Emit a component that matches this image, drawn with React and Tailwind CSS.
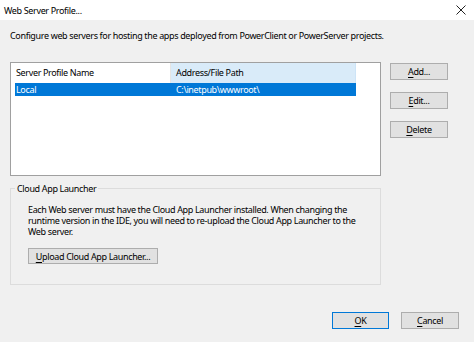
import React from 'react';

const font = "font-['Noto_Sans','Liberation_Sans',sans-serif]";
const txt = 'text-[9px] tracking-[-0.35px]';

const DlgButton = ({ accel, rest, isDefault = false, className = '' }) => (
  <button
    className={`flex items-center justify-center whitespace-nowrap bg-[#e1e1e1] ${txt} leading-none text-black border ${
      isDefault ? 'border-[#0078d7] border-[1.5px]' : 'border-[#adadad]'
    } ${className}`}
  >
    <span>
      <span className="underline underline-offset-[1.5px]">{accel}</span>
      {rest}
    </span>
  </button>
);

const App = () => {
  return (
    <div className={`w-[474px] h-[342px] bg-[#f0f0f0] flex flex-col text-black ${font}`}>
      {/* Title bar */}
      <div className="h-[20px] bg-white flex items-center justify-between pl-[4px] pr-[8px]">
        <span className={`${txt} leading-none`}>Web Server Profile...</span>
        <svg width="10" height="10" viewBox="0 0 10 10">
          <path d="M0.5 0.5 L9.5 9.5 M9.5 0.5 L0.5 9.5" stroke="#222" strokeWidth="1" />
        </svg>
      </div>

      <div className="flex flex-col px-[10px]">
        <p className={`mt-[9px] ${txt} leading-[13px]`}>
          Configure web servers for hosting the apps deployed from PowerClient or PowerServer projects.
        </p>

        <div className="flex mt-[20px]">
          {/* Profile list */}
          <div className="w-[371px] h-[114px] bg-white border border-[#a0a0a0] flex flex-col">
            <div className={`flex h-[20px] ${txt}`}>
              <div className="w-[160px] flex items-center pl-[5px] border-r border-[#e5e5e5]">
                Server Profile Name
              </div>
              <div className="w-[185px] flex items-center pl-[5px] bg-[#d9ebf9] border-r border-[#cde4f7]">
                Address/File Path
              </div>
            </div>
            <div className={`flex h-[13px] ml-[4px] mr-[24px] bg-[#0078d7] text-white ${txt} leading-[13px]`}>
              <div className="w-[156px] pl-[1px]">Local</div>
              <div className="pl-[5px]">C:\inetpub\wwwroot\</div>
            </div>
          </div>

          {/* Side buttons */}
          <div className="flex flex-col ml-[9px] gap-[12px] pt-[1px]">
            <DlgButton accel="A" rest="dd..." className="w-[58px] h-[17px]" />
            <DlgButton accel="E" rest="dit..." className="w-[58px] h-[17px]" />
            <DlgButton accel="D" rest="elete" className="w-[58px] h-[17px]" />
          </div>
        </div>

        {/* Cloud App Launcher group */}
        <fieldset className="w-[371px] mt-[6px] border border-[#dcdcdc] px-[4px] pb-[20px]">
          <legend className={`px-[2px] ${txt} leading-[13px]`}>Cloud App Launcher</legend>
          <div className="pl-[13px]">
            <p className={`mt-[9px] ${txt} leading-[11px] w-[345px]`}>
              Each Web server must have the Cloud App Launcher installed. When changing the runtime version in
              the IDE, you will need to re-upload the Cloud App Launcher to the Web server.
            </p>
            <DlgButton accel="U" rest="pload Cloud App Launcher..." className="w-[130px] h-[16px] mt-[11px]" />
          </div>
        </fieldset>
      </div>

      {/* Footer */}
      <div className="flex justify-end gap-[12px] pr-[15px] mt-[27px]">
        <DlgButton accel="O" rest="K" isDefault className="w-[57px] h-[17px]" />
        <DlgButton accel="C" rest="ancel" className="w-[58px] h-[17px]" />
      </div>
    </div>
  );
};

export default App;
